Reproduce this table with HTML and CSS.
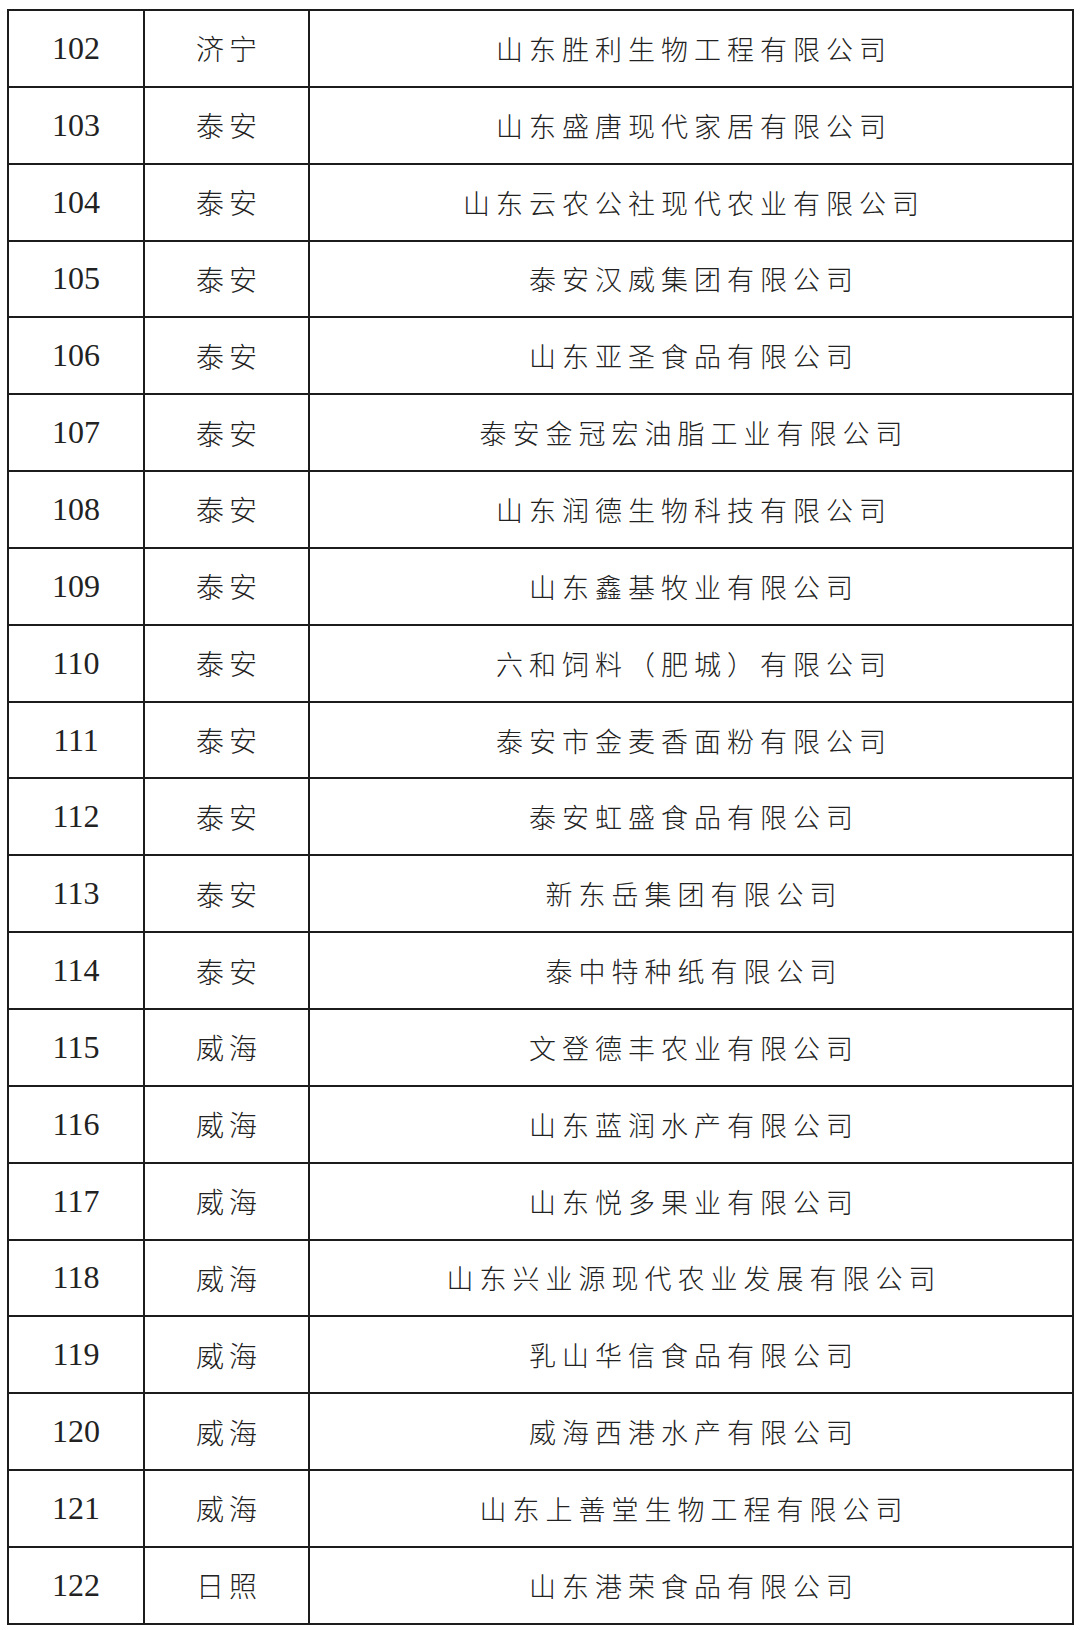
FILE: index.html
```html
<!DOCTYPE html>
<html lang="zh-CN">
<head>
<meta charset="utf-8">
<title>名单</title>
<link rel="stylesheet" href="styles.css">
</head>
<body>
<div class="page">
<table class="list">
<colgroup><col class="c-no"><col class="c-city"><col class="c-name"></colgroup>
<tbody>
<tr><td class="no">102</td><td class="city">济宁</td><td class="name">山东胜利生物工程有限公司</td></tr>
<tr><td class="no">103</td><td class="city">泰安</td><td class="name">山东盛唐现代家居有限公司</td></tr>
<tr><td class="no">104</td><td class="city">泰安</td><td class="name">山东云农公社现代农业有限公司</td></tr>
<tr><td class="no">105</td><td class="city">泰安</td><td class="name">泰安汉威集团有限公司</td></tr>
<tr><td class="no">106</td><td class="city">泰安</td><td class="name">山东亚圣食品有限公司</td></tr>
<tr><td class="no">107</td><td class="city">泰安</td><td class="name">泰安金冠宏油脂工业有限公司</td></tr>
<tr><td class="no">108</td><td class="city">泰安</td><td class="name">山东润德生物科技有限公司</td></tr>
<tr><td class="no">109</td><td class="city">泰安</td><td class="name">山东鑫基牧业有限公司</td></tr>
<tr><td class="no">110</td><td class="city">泰安</td><td class="name">六和饲料（肥城）有限公司</td></tr>
<tr><td class="no">111</td><td class="city">泰安</td><td class="name">泰安市金麦香面粉有限公司</td></tr>
<tr><td class="no">112</td><td class="city">泰安</td><td class="name">泰安虹盛食品有限公司</td></tr>
<tr><td class="no">113</td><td class="city">泰安</td><td class="name">新东岳集团有限公司</td></tr>
<tr><td class="no">114</td><td class="city">泰安</td><td class="name">泰中特种纸有限公司</td></tr>
<tr><td class="no">115</td><td class="city">威海</td><td class="name">文登德丰农业有限公司</td></tr>
<tr><td class="no">116</td><td class="city">威海</td><td class="name">山东蓝润水产有限公司</td></tr>
<tr><td class="no">117</td><td class="city">威海</td><td class="name">山东悦多果业有限公司</td></tr>
<tr><td class="no">118</td><td class="city">威海</td><td class="name">山东兴业源现代农业发展有限公司</td></tr>
<tr><td class="no">119</td><td class="city">威海</td><td class="name">乳山华信食品有限公司</td></tr>
<tr><td class="no">120</td><td class="city">威海</td><td class="name">威海西港水产有限公司</td></tr>
<tr><td class="no">121</td><td class="city">威海</td><td class="name">山东上善堂生物工程有限公司</td></tr>
<tr><td class="no">122</td><td class="city">日照</td><td class="name">山东港荣食品有限公司</td></tr>
</tbody>
</table>
</div>
</body>
</html>
```
FILE: styles.css
```css
html, body {
  margin: 0;
  padding: 0;
  background: #ffffff;
}
.page {
  padding: 9px 7px 0 7px;
}
.list {
  width: 1067px;
  border-collapse: collapse;
  table-layout: fixed;
  color: #222222;
}
.c-no { width: 136px; }
.c-city { width: 165px; }
.c-name { width: auto; }
.list td {
  border: 2px solid #1c1c1c;
  height: 74.85px;
  padding: 0;
  text-align: center;
  vertical-align: middle;
}
.no {
  font-family: "Liberation Serif", "Times New Roman", serif;
  font-size: 32px;
  padding-top: 2px;
}
.city, .name {
  font-family: "Noto Sans CJK SC", sans-serif;
  font-weight: 300;
  font-size: 27px;
  letter-spacing: 6px;
  text-indent: 6px;
}
.city {
  font-size: 28px;
  letter-spacing: 5px;
  text-indent: 5px;
}
```
